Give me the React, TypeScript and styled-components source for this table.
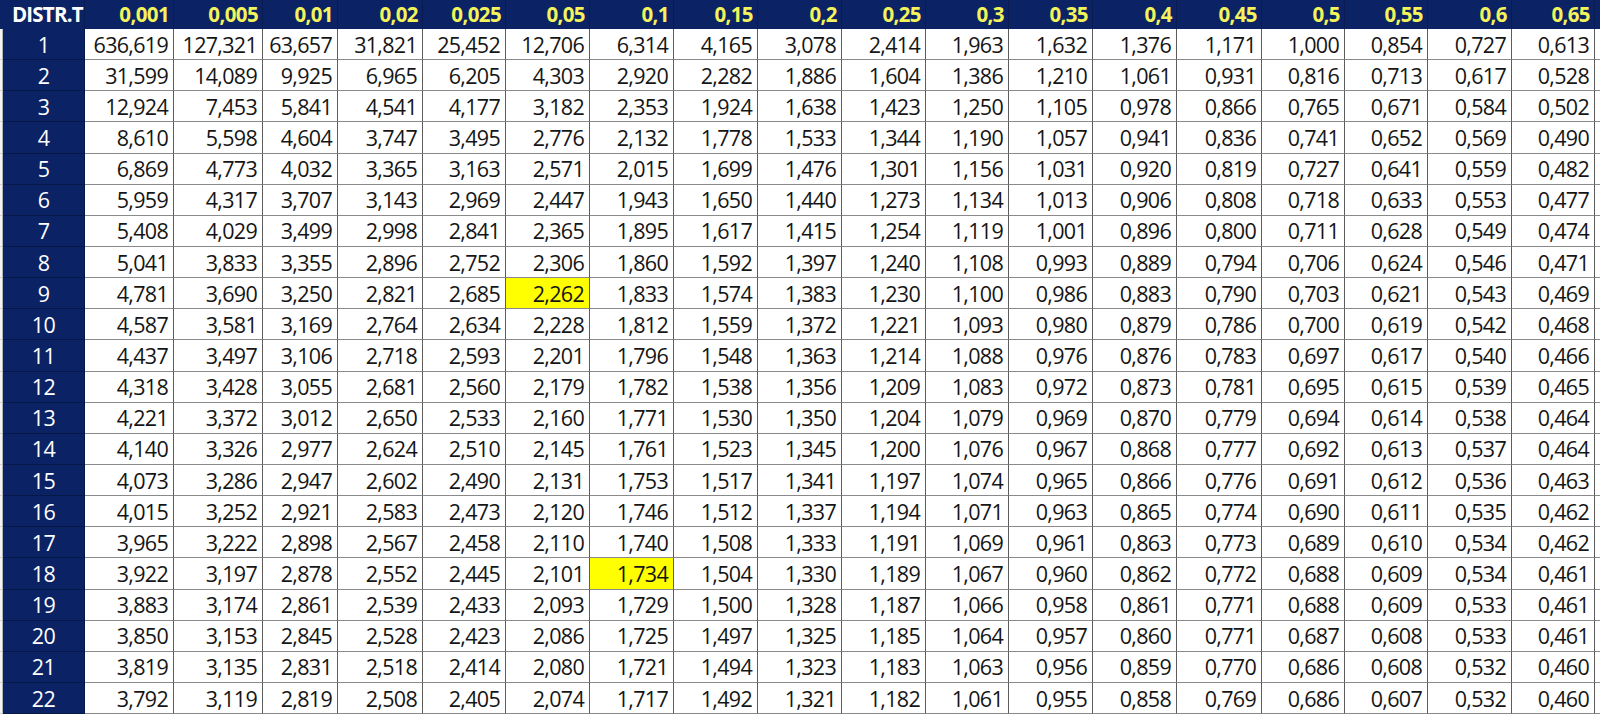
import React from "react";
import styled, { createGlobalStyle, css } from "styled-components";

const GlobalStyle = createGlobalStyle`
  html, body {
    margin: 0;
    padding: 0;
    background: #ffffff;
    overflow: hidden;
  }
  body {
    font-family: "Open Sans", "Noto Sans", "Liberation Sans", sans-serif;
  }
`;

const NAVY = "#0b2265";

const COLS = [
  "3px", "82px", "89px", "89px", "75px", "85px", "83px", "84px", "84px", "84px",
  "84px", "84px", "83px", "84px", "84px", "85px", "83px", "83px", "84px", "83px", "1fr",
];

const Sheet = styled.div`
  display: grid;
  grid-template-columns: ${COLS.join(" ")};
  grid-template-rows: 29px repeat(22, 31.15px);
  width: 1600px;
  height: 714px;
  overflow: hidden;
  background: #ffffff;
`;

const HeadCell = styled.div<{ $align?: "left" | "right" }>`
  box-sizing: border-box;
  background: ${NAVY};
  color: #f4f45a;
  font-weight: 700;
  font-size: 20.5px;
  letter-spacing: -0.6px;
  display: flex;
  align-items: center;
  justify-content: ${(p) => (p.$align === "left" ? "flex-start" : "flex-end")};
  padding: 0 4px 2px 6px;
  border-right: 1px solid #0a1b50;
  white-space: nowrap;
  overflow: hidden;
`;

const HeadLabel = styled(HeadCell)`
  color: #ffffff;
  padding-left: 9px;
  letter-spacing: -0.8px;
`;

const EdgeHead = styled.div`
  background: ${NAVY};
`;

const Edge = styled.div`
  box-sizing: border-box;
  background: #f4f4f4;
  border-right: 1px solid #b5b5b5;
  border-bottom: 1px solid #d0d0d0;
`;

const IndexCell = styled.div`
  box-sizing: border-box;
  background: ${NAVY};
  color: #ffffff;
  font-size: 21.5px;
  letter-spacing: -0.6px;
  display: flex;
  align-items: center;
  justify-content: center;
  border-bottom: 1px solid #061845;
  border-right: 1px solid #061845;
`;

const ValueCell = styled.div<{ $hl?: boolean }>`
  box-sizing: border-box;
  background: #ffffff;
  color: #151515;
  font-size: 21.5px;
  letter-spacing: -0.7px;
  display: flex;
  align-items: center;
  justify-content: flex-end;
  padding: 0 5px 0 0;
  border-right: 1px solid #5c5c5c;
  border-bottom: 1px solid #8a8a8a;
  white-space: nowrap;
  ${(p) =>
    p.$hl &&
    css`
      background: #ffff00;
    `}
`;

const TailCell = styled.div`
  box-sizing: border-box;
  background: #ffffff;
  border-bottom: 1px solid #8a8a8a;
`;

const HEADERS = [
  "0,001", "0,005", "0,01", "0,02", "0,025", "0,05", "0,1", "0,15", "0,2",
  "0,25", "0,3", "0,35", "0,4", "0,45", "0,5", "0,55", "0,6", "0,65",
];

const DATA: string[] = [
  "636,619 127,321 63,657 31,821 25,452 12,706 6,314 4,165 3,078 2,414 1,963 1,632 1,376 1,171 1,000 0,854 0,727 0,613",
  "31,599 14,089 9,925 6,965 6,205 4,303 2,920 2,282 1,886 1,604 1,386 1,210 1,061 0,931 0,816 0,713 0,617 0,528",
  "12,924 7,453 5,841 4,541 4,177 3,182 2,353 1,924 1,638 1,423 1,250 1,105 0,978 0,866 0,765 0,671 0,584 0,502",
  "8,610 5,598 4,604 3,747 3,495 2,776 2,132 1,778 1,533 1,344 1,190 1,057 0,941 0,836 0,741 0,652 0,569 0,490",
  "6,869 4,773 4,032 3,365 3,163 2,571 2,015 1,699 1,476 1,301 1,156 1,031 0,920 0,819 0,727 0,641 0,559 0,482",
  "5,959 4,317 3,707 3,143 2,969 2,447 1,943 1,650 1,440 1,273 1,134 1,013 0,906 0,808 0,718 0,633 0,553 0,477",
  "5,408 4,029 3,499 2,998 2,841 2,365 1,895 1,617 1,415 1,254 1,119 1,001 0,896 0,800 0,711 0,628 0,549 0,474",
  "5,041 3,833 3,355 2,896 2,752 2,306 1,860 1,592 1,397 1,240 1,108 0,993 0,889 0,794 0,706 0,624 0,546 0,471",
  "4,781 3,690 3,250 2,821 2,685 2,262 1,833 1,574 1,383 1,230 1,100 0,986 0,883 0,790 0,703 0,621 0,543 0,469",
  "4,587 3,581 3,169 2,764 2,634 2,228 1,812 1,559 1,372 1,221 1,093 0,980 0,879 0,786 0,700 0,619 0,542 0,468",
  "4,437 3,497 3,106 2,718 2,593 2,201 1,796 1,548 1,363 1,214 1,088 0,976 0,876 0,783 0,697 0,617 0,540 0,466",
  "4,318 3,428 3,055 2,681 2,560 2,179 1,782 1,538 1,356 1,209 1,083 0,972 0,873 0,781 0,695 0,615 0,539 0,465",
  "4,221 3,372 3,012 2,650 2,533 2,160 1,771 1,530 1,350 1,204 1,079 0,969 0,870 0,779 0,694 0,614 0,538 0,464",
  "4,140 3,326 2,977 2,624 2,510 2,145 1,761 1,523 1,345 1,200 1,076 0,967 0,868 0,777 0,692 0,613 0,537 0,464",
  "4,073 3,286 2,947 2,602 2,490 2,131 1,753 1,517 1,341 1,197 1,074 0,965 0,866 0,776 0,691 0,612 0,536 0,463",
  "4,015 3,252 2,921 2,583 2,473 2,120 1,746 1,512 1,337 1,194 1,071 0,963 0,865 0,774 0,690 0,611 0,535 0,462",
  "3,965 3,222 2,898 2,567 2,458 2,110 1,740 1,508 1,333 1,191 1,069 0,961 0,863 0,773 0,689 0,610 0,534 0,462",
  "3,922 3,197 2,878 2,552 2,445 2,101 1,734 1,504 1,330 1,189 1,067 0,960 0,862 0,772 0,688 0,609 0,534 0,461",
  "3,883 3,174 2,861 2,539 2,433 2,093 1,729 1,500 1,328 1,187 1,066 0,958 0,861 0,771 0,688 0,609 0,533 0,461",
  "3,850 3,153 2,845 2,528 2,423 2,086 1,725 1,497 1,325 1,185 1,064 0,957 0,860 0,771 0,687 0,608 0,533 0,461",
  "3,819 3,135 2,831 2,518 2,414 2,080 1,721 1,494 1,323 1,183 1,063 0,956 0,859 0,770 0,686 0,608 0,532 0,460",
  "3,792 3,119 2,819 2,508 2,405 2,074 1,717 1,492 1,321 1,182 1,061 0,955 0,858 0,769 0,686 0,607 0,532 0,460",
];

const HIGHLIGHTS: Record<string, boolean> = { "8-5": true, "17-6": true };

export default function App() {
  return (
    <>
      <GlobalStyle />
      <Sheet>
        <EdgeHead />
        <HeadLabel $align="left">DISTR.T</HeadLabel>
        {HEADERS.map((h) => (
          <HeadCell key={h}>{h}</HeadCell>
        ))}
        <EdgeHead />
        {DATA.map((line, r) => (
          <React.Fragment key={r}>
            <Edge />
            <IndexCell>{r + 1}</IndexCell>
            {line.split(" ").map((v, c) => (
              <ValueCell key={c} $hl={!!HIGHLIGHTS[`${r}-${c}`]}>
                {v}
              </ValueCell>
            ))}
            <TailCell />
          </React.Fragment>
        ))}
      </Sheet>
    </>
  );
}
